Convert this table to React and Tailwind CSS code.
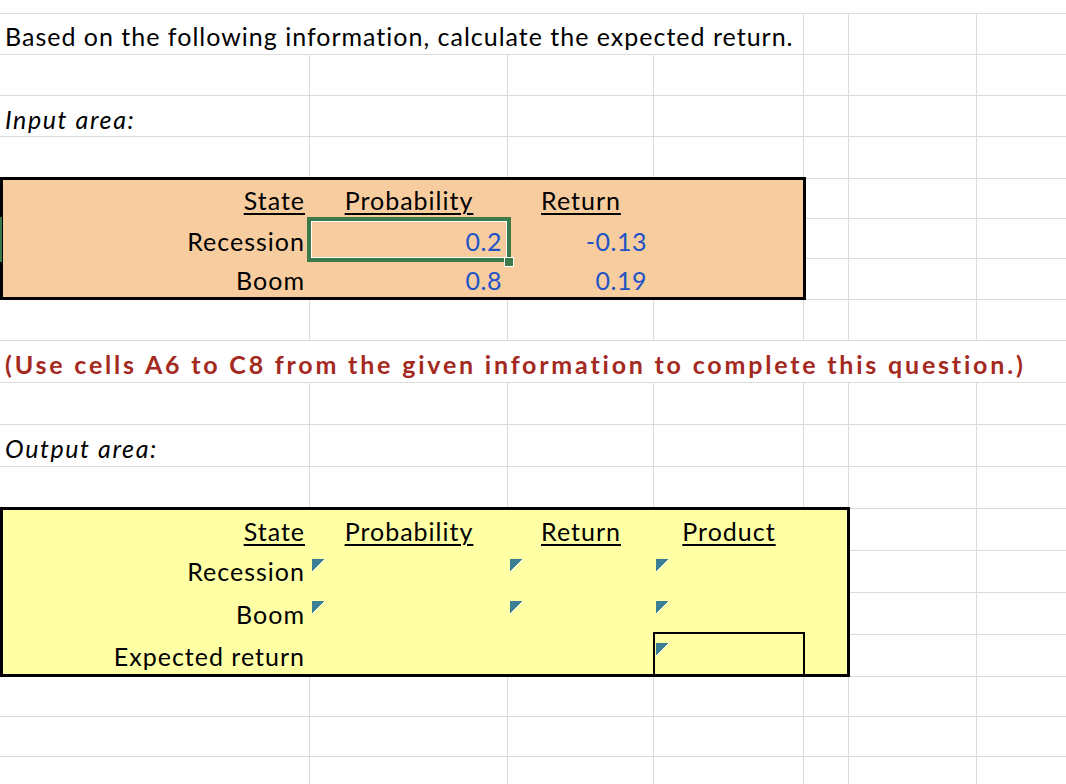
const TRACKS =
  "grid grid-cols-[310px_198px_146px_150px_45px_128px_89px] grid-rows-[14px_41px_41px_41px_42px_40px_40px_41px_41px_42px_42px_42px_42px_42px_42px_42px_42px_40px_40px_40px]";

const ROWS = [
  "full", "title", "grid", "grid", "grid", "grid", "grid", "grid", "grid", "full",
  "grid", "grid", "grid", "grid", "grid", "grid", "grid", "grid", "grid", "grid",
];

const line = "border-[#dcdcdc]";

function GridRow({ kind }) {
  if (kind === "full") return <div className={`col-span-7 border-b ${line}`} />;
  const singles = kind === "title" ? 3 : 7;
  return (
    <>
      {kind === "title" && <div className={`col-span-4 border-b border-r ${line}`} />}
      {Array.from({ length: singles }).map((_, i) => (
        <div key={i} className={i === singles - 1 ? `border-b ${line}` : `border-b border-r ${line}`} />
      ))}
    </>
  );
}

function ErrMark({ className }) {
  return (
    <svg width="13" height="13" viewBox="0 0 13 13" className={`mt-[8px] ml-[2px] self-start justify-self-start ${className}`}>
      <polygon points="0,0 13,0 0,13" fill="#3b7f93" />
      <line x1="13" y1="0" x2="0" y2="13" stroke="#ffffff" strokeWidth="1" />
    </svg>
  );
}

const ul = "underline decoration-[2px] underline-offset-[3px]";
const num = "tracking-[0.5px] text-[#2153c6]";

export default function App() {
  return (
    <div className="grid h-[784px] w-[1066px] overflow-hidden bg-white text-black font-['Lato','Liberation_Sans',sans-serif] text-[25px] leading-[28px] tracking-[1px]">
      {/* sheet gridlines */}
      <div className={`${TRACKS} col-start-1 row-start-1`}>
        {ROWS.map((k, i) => (
          <GridRow key={i} kind={k} />
        ))}
      </div>

      {/* cells */}
      <div className={`${TRACKS} col-start-1 row-start-1`}>
        <div className="col-start-1 col-span-7 row-start-2 flex items-end pb-[5px] pl-[5px] whitespace-nowrap">
          Based on the following information, calculate the expected return.
        </div>
        <div className="col-start-1 row-start-4 flex items-end pb-[4px] pl-[5px] italic tracking-[1.6px] whitespace-nowrap">
          Input area:
        </div>

        {/* input box */}
        <div className="col-start-1 col-span-4 row-start-6 row-span-3 -mt-[2px] -mr-[2px] border-[3px] border-black bg-[#f7cda0]" />
        <div className="col-start-1 row-start-7 -mt-[2px] h-[45px] w-[2px] self-start justify-self-start bg-[#3b7b4a]" />

        <div className="col-start-1 row-start-6 flex items-end justify-end pb-[5px] pr-[5px]">
          <span className={ul}>State</span>
        </div>
        <div className="col-start-2 row-start-6 flex items-end justify-center pb-[5px]">
          <span className={ul}>Probability</span>
        </div>
        <div className="col-start-3 row-start-6 flex items-end justify-center pb-[5px]">
          <span className={ul}>Return</span>
        </div>

        <div className="col-start-1 row-start-7 flex items-end justify-end pb-[4px] pr-[5px]">Recession</div>
        <div className={`relative col-start-2 row-start-7 flex items-end justify-end pb-[4px] pr-[6px] ${num}`}>
          0.2
          <div className="absolute -top-[2px] -bottom-[3px] -left-[3px] -right-[3px] border-[4px] border-[#3b7b4a]">
            <div className="h-full w-full border border-white" />
          </div>
          <div className="absolute -right-[6px] -bottom-[8px] h-[10px] w-[10px] border border-white bg-[#3b7b4a]" />
        </div>
        <div className={`col-start-3 row-start-7 flex items-end justify-end pb-[4px] pr-[7px] ${num}`}>-0.13</div>

        <div className="col-start-1 row-start-8 flex items-end justify-end pb-[6px] pr-[5px]">Boom</div>
        <div className={`col-start-2 row-start-8 flex items-end justify-end pb-[6px] pr-[6px] ${num}`}>0.8</div>
        <div className={`col-start-3 row-start-8 flex items-end justify-end pb-[6px] pr-[7px] ${num}`}>0.19</div>

        <div className="col-start-1 col-span-7 row-start-10 flex items-end pb-[5px] pl-[5px] font-bold tracking-[2.8px] text-[#a4291f] whitespace-nowrap">
          (Use cells A6 to C8 from the given information to complete this question.)
        </div>
        <div className="col-start-1 row-start-12 flex items-end pb-[5px] pl-[5px] italic tracking-[1.6px] whitespace-nowrap">
          Output area:
        </div>

        {/* output box */}
        <div className="col-start-1 col-span-5 row-start-14 row-span-4 -mt-[2px] -mr-[1px] border-[3px] border-black bg-[#ffffa6]" />
        <div className="col-start-4 row-start-17 -mt-[3px] -ml-[1px] mr-[-1px] mb-[3px] border-2 border-b-0 border-black" />

        <div className="col-start-1 row-start-14 flex items-end justify-end pb-[6px] pr-[5px]">
          <span className={ul}>State</span>
        </div>
        <div className="col-start-2 row-start-14 flex items-end justify-center pb-[6px]">
          <span className={ul}>Probability</span>
        </div>
        <div className="col-start-3 row-start-14 flex items-end justify-center pb-[6px]">
          <span className={ul}>Return</span>
        </div>
        <div className="col-start-4 row-start-14 flex items-end justify-center pb-[6px]">
          <span className={ul}>Product</span>
        </div>

        <div className="col-start-1 row-start-15 flex items-end justify-end pb-[8px] pr-[5px]">Recession</div>
        <ErrMark className="col-start-2 row-start-15" />
        <ErrMark className="col-start-3 row-start-15" />
        <ErrMark className="col-start-4 row-start-15" />

        <div className="col-start-1 row-start-16 flex items-end justify-end pb-[7px] pr-[5px]">Boom</div>
        <ErrMark className="col-start-2 row-start-16" />
        <ErrMark className="col-start-3 row-start-16" />
        <ErrMark className="col-start-4 row-start-16" />

        <div className="col-start-1 row-start-17 flex items-end justify-end pb-[7px] pr-[5px] whitespace-nowrap">Expected return</div>
        <ErrMark className="col-start-4 row-start-17" />
      </div>
    </div>
  );
}
